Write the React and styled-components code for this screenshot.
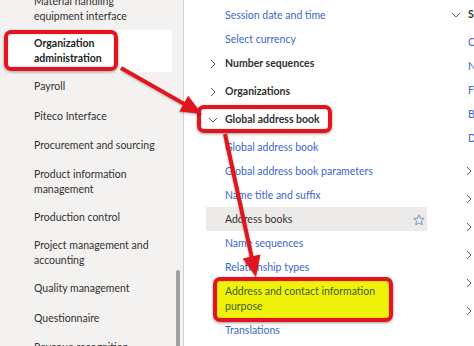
import React from 'react';
import styled, { createGlobalStyle } from 'styled-components';

const Global = createGlobalStyle`
  html, body { margin: 0; padding: 0; background: #fff; }
  body { font-family: Lato, "Open Sans", Arial, sans-serif; overflow: hidden; }
  #root { width: 474px; height: 346px; }
`;

const RED = '#e3141d';

const Page = styled.div`
  position: relative;
  display: flex;
  width: 474px;
  height: 346px;
  overflow: hidden;
  background: #fff;
  font-size: 10.5px;
  line-height: 15px;
  color: #323130;
`;

/* ---------- left navigation ---------- */
const LeftPanel = styled.nav`
  position: relative;
  flex: 0 0 183px;
  background: #f3f2f1;
  border-right: 1px solid #d4d2d0;
  overflow: hidden;
`;

const NavList = styled.ul`
  list-style: none;
  margin: -12px 0 0;
  padding: 0;
`;

const NavItem = styled.li`
  position: relative;
  display: flex;
  align-items: center;
  box-sizing: border-box;
  min-height: 29.5px;
  margin: 0 11px 0 6px;
  padding: 6px 6px 6px 28px;
  white-space: nowrap;
  background: ${p => (p.$selected ? '#ffffff' : 'transparent')};
  color: ${p => (p.$selected ? '#201f1e' : '#323130')};
  font-weight: ${p => (p.$selected ? 700 : 400)};
`;

const ScrollThumb = styled.div`
  position: absolute;
  right: 3px;
  top: 270px;
  width: 4px;
  height: 90px;
  border-radius: 2px;
  background: #a19f9d;
`;

/* ---------- link columns ---------- */
const Column = styled.section`
  flex: 0 0 ${p => p.$width}px;
  padding-top: ${p => p.$top}px;
  overflow: hidden;
  white-space: nowrap;
`;

const LinkRow = styled.div`
  position: relative;
  box-sizing: border-box;
  padding: 5px 0 4px 41px;
  color: #3a68c9;
`;

const HoverRow = styled(LinkRow)`
  display: flex;
  align-items: center;
  justify-content: space-between;
  margin-left: 22px;
  padding-left: 19px;
  padding-right: 2px;
  background: #edebe9;
  color: #323130;
`;

const MarkedRow = styled(LinkRow)`
  margin: 1px 0 0 32px;
  width: 173px;
  padding: 4px 0 4px 9px;
  background: #f1f20c;
  color: #42611b;
`;

const GroupRow = styled.div`
  position: relative;
  display: flex;
  align-items: center;
  gap: 7px;
  box-sizing: border-box;
  height: 28px;
  padding: 0 0 3px ${p => p.$indent || 24}px;
  font-weight: 700;
  color: #323130;
`;

const GroupList = styled.div`
  margin-top: ${p => p.$gap || 0}px;
`;

const ChevronBox = styled.svg`
  flex: 0 0 10px;
  width: 10px;
  height: 10px;
`;

const Chevron = ({ open }) => (
  <ChevronBox viewBox="0 0 10 10">
    <path
      d={open ? 'M1 3 L5 7 L9 3' : 'M3 1 L7 5 L3 9'}
      fill="none"
      stroke="#605e5c"
      strokeWidth="1"
    />
  </ChevronBox>
);

const StarIcon = styled.svg`
  width: 12px;
  height: 12px;
  flex: 0 0 12px;
`;

const Star = () => (
  <StarIcon viewBox="0 0 12 12">
    <path
      d="M6 0.8 L7.5 4.3 L11.2 4.6 L8.4 7 L9.3 10.8 L6 8.8 L2.7 10.8 L3.6 7 L0.8 4.6 L4.5 4.3 Z"
      fill="none"
      stroke="#6d8fb5"
      strokeWidth="0.9"
      strokeLinejoin="round"
    />
  </StarIcon>
);

/* ---------- annotations (overlays) ---------- */
const Callout = styled.span`
  position: absolute;
  box-sizing: border-box;
  left: ${p => p.$l}px;
  top: ${p => p.$t}px;
  width: ${p => p.$w}px;
  height: ${p => p.$h}px;
  border: 4px solid ${RED};
  border-radius: 7px;
  box-shadow: 0 1px 3px rgba(0, 0, 0, 0.4), inset 0 0 2px rgba(0, 0, 0, 0.25);
  pointer-events: none;
`;

const ArrowLayer = styled.svg`
  position: absolute;
  left: 0;
  top: 0;
  width: 474px;
  height: 346px;
  pointer-events: none;
  filter: drop-shadow(0 1px 1px rgba(0, 0, 0, 0.3));
`;

const Arrow = ({ from, to, head = 21, half = 9 }) => {
  const [x1, y1] = from;
  const [x2, y2] = to;
  const dx = x2 - x1;
  const dy = y2 - y1;
  const len = Math.hypot(dx, dy);
  const ux = dx / len;
  const uy = dy / len;
  const bx = x2 - ux * head;
  const by = y2 - uy * head;
  const nx = -uy;
  const ny = ux;
  const pts = [
    [x2, y2],
    [bx + nx * half, by + ny * half],
    [bx - nx * half, by - ny * half],
  ]
    .map(p => p.join(','))
    .join(' ');
  return (
    <g>
      <line x1={x1} y1={y1} x2={bx + ux * 2} y2={by + uy * 2} stroke={RED} strokeWidth="4" />
      <polygon points={pts} fill={RED} />
    </g>
  );
};

const leftItems = [
  { lines: ['Material handling', 'equipment interface'] },
  { lines: ['Organization', 'administration'], selected: true },
  { lines: ['Payroll'] },
  { lines: ['Piteco Interface'] },
  { lines: ['Procurement and sourcing'] },
  { lines: ['Product information', 'management'] },
  { lines: ['Production control'] },
  { lines: ['Project management and', 'accounting'] },
  { lines: ['Quality management'] },
  { lines: ['Questionnaire'] },
  { lines: ['Revenue recognition'] },
];

const Lines = ({ lines }) => (
  <span>
    {lines.map((l, i) => (
      <React.Fragment key={l}>
        {i > 0 && <br />}
        {l}
      </React.Fragment>
    ))}
  </span>
);

export default function App() {
  return (
    <>
      <Global />
      <Page>
        <LeftPanel>
          <NavList>
            {leftItems.map(item => (
              <NavItem key={item.lines[0]} $selected={item.selected}>
                <Lines lines={item.lines} />
                {item.selected && <Callout $l={-2} $t={-0.5} $w={114} $h={41} />}
              </NavItem>
            ))}
          </NavList>
          <ScrollThumb />
        </LeftPanel>

        <Column $width={243} $top={3}>
          <LinkRow>Session date and time</LinkRow>
          <LinkRow>Select currency</LinkRow>
          <GroupRow>
            <Chevron />
            <span>Number sequences</span>
          </GroupRow>
          <GroupRow>
            <Chevron />
            <span>Organizations</span>
          </GroupRow>
          <GroupRow>
            <Chevron open />
            <span>Global address book</span>
            <Callout $l={13} $t={-2} $w={135} $h={28} />
          </GroupRow>
          <LinkRow>Global address book</LinkRow>
          <LinkRow>Global address book parameters</LinkRow>
          <LinkRow>Name title and suffix</LinkRow>
          <HoverRow>
            <span>Address books</span>
            <Star />
          </HoverRow>
          <LinkRow>Name sequences</LinkRow>
          <LinkRow>Relationship types</LinkRow>
          <MarkedRow>
            Address and contact information
            <br />
            purpose
            <Callout $l={-3} $t={-3} $w={180} $h={45} />
          </MarkedRow>
          <LinkRow>Translations</LinkRow>
        </Column>

        <Column $width={48} $top={2}>
          <GroupRow>
            <Chevron open />
            <span>Security</span>
          </GroupRow>
          <LinkRow>Calendars</LinkRow>
          <LinkRow>Number sequences</LinkRow>
          <LinkRow>Fiscal calendars</LinkRow>
          <LinkRow>Bank</LinkRow>
          <LinkRow>Document management</LinkRow>
          <GroupList $gap={8}>
            {['Addresses', 'Contacts', 'Parties', 'Locations', 'Roles', 'Purposes'].map(g => (
              <GroupRow key={g} $indent={37}>
                <Chevron />
                <span>{g}</span>
              </GroupRow>
            ))}
          </GroupList>
        </Column>

        <ArrowLayer viewBox="0 0 474 346">
          <Arrow from={[121, 68]} to={[202, 114]} />
          <Arrow from={[225, 134]} to={[256, 277]} />
        </ArrowLayer>
      </Page>
    </>
  );
}
